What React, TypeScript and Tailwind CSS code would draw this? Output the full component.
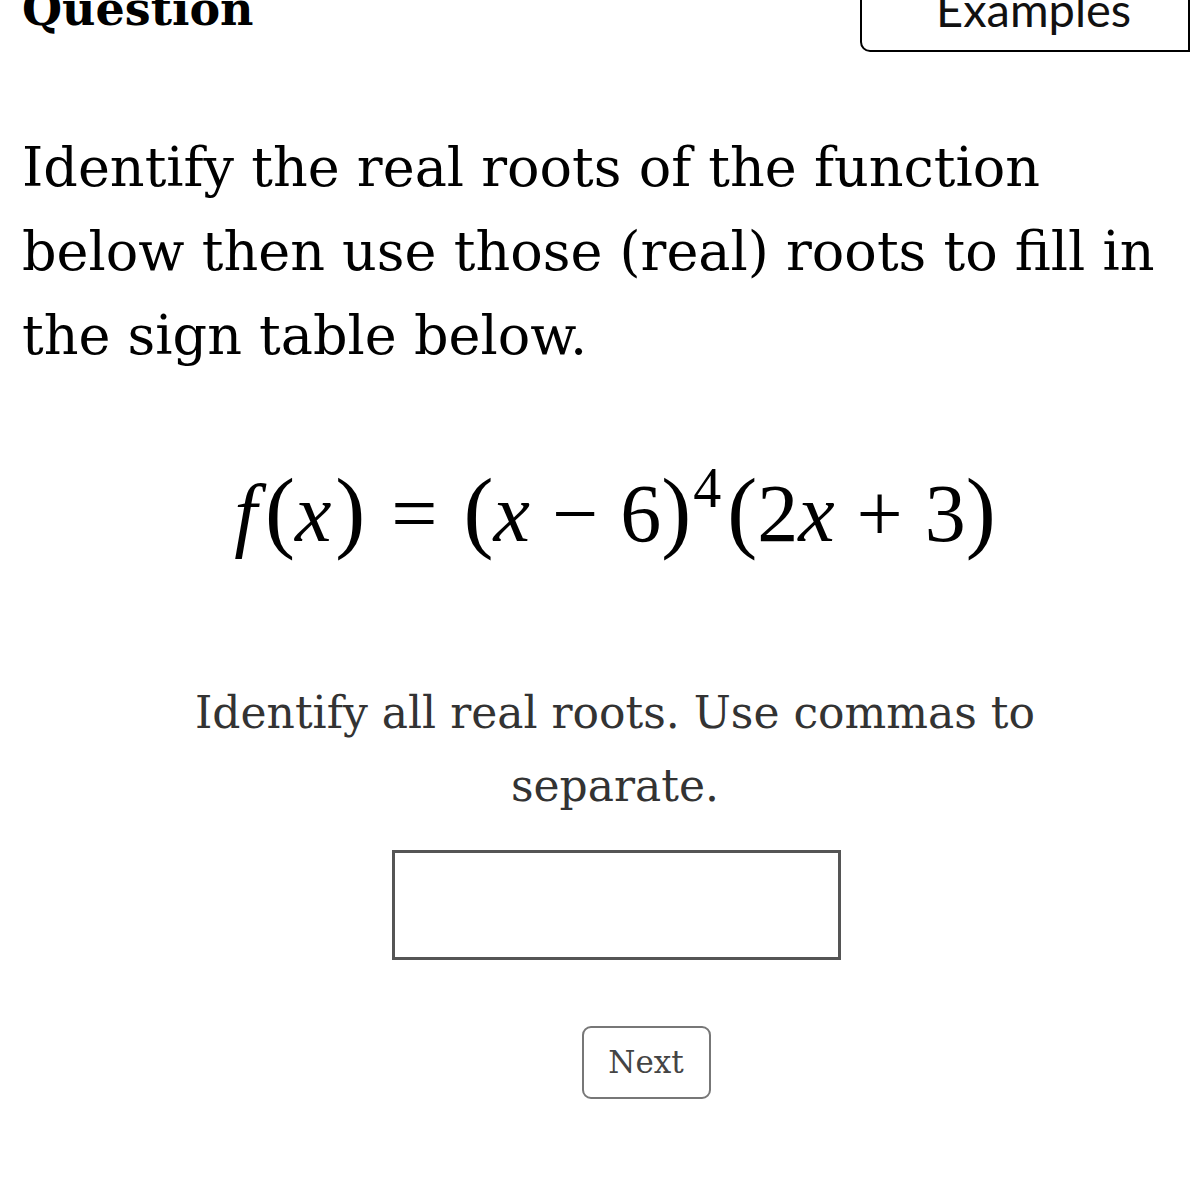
import React from 'react';

const serif = { fontFamily: '"DejaVu Serif", "Liberation Serif", serif' };
const math = { fontFamily: '"Liberation Serif", "DejaVu Serif", serif' };

function Formula() {
  return (
    <div
      className="flex items-baseline justify-center text-[82px] leading-none text-black"
      style={math}
    >
      <span className="italic">f</span>
      <span className="ml-[8px] text-[90px]">(</span>
      <span className="italic">x</span>
      <span className="ml-[4px] text-[90px]">)</span>
      <span className="mx-[26px]">=</span>
      <span className="text-[90px]">(</span>
      <span className="italic">x</span>
      <span className="mx-[22px]">−</span>
      <span>6</span>
      <span className="text-[90px]">)</span>
      <span className="relative -top-[34px] ml-[2px] text-[56px]">4</span>
      <span className="ml-[6px] text-[90px]">(</span>
      <span>2</span>
      <span className="italic">x</span>
      <span className="mx-[22px]">+</span>
      <span>3</span>
      <span className="text-[90px]">)</span>
    </div>
  );
}

export default function App() {
  return (
    <div className="relative h-[1190px] w-[1190px] overflow-hidden bg-white">
      <div className="flex items-start justify-between">
        <h2
          className="-mt-[14px] pl-[22px] text-[46px] font-bold leading-none text-black"
          style={serif}
        >
          Question
        </h2>
        <button
          className="-mt-[10px] h-[62px] w-[330px] rounded-bl-[10px] border-2 border-black pl-[74px] text-left text-[47px] leading-none text-[#111]"
          style={{ fontFamily: 'Lato, "Noto Sans", sans-serif' }}
        >
          <span className="relative -top-[12px]">Examples</span>
        </button>
      </div>

      <p
        className="mt-[74px] whitespace-nowrap pl-[22px] text-[54px] leading-[84px] text-black"
        style={serif}
      >
        Identify the real roots of the function
        <br />
        below then use those (real) roots to fill in
        <br />
        the sign table below.
      </p>

      <div className="mt-[88px] pl-[40px]">
        <Formula />
      </div>

      <p
        className="mt-[120px] whitespace-nowrap pl-[40px] text-center text-[44px] leading-[73px] text-[#333]"
        style={serif}
      >
        Identify all real roots. Use commas to
        <br />
        separate.
      </p>

      <div className="mt-[28px] flex justify-center pl-[42px]">
        <input
          type="text"
          className="h-[110px] w-[449px] border-[3px] border-[#555] bg-white outline-none"
        />
      </div>

      <div className="mt-[66px] flex justify-center pl-[102px]">
        <button
          className="h-[73px] w-[129px] rounded-[9px] border-2 border-[#777] bg-white text-[31px] text-[#444]"
          style={serif}
        >
          Next
        </button>
      </div>
    </div>
  );
}
